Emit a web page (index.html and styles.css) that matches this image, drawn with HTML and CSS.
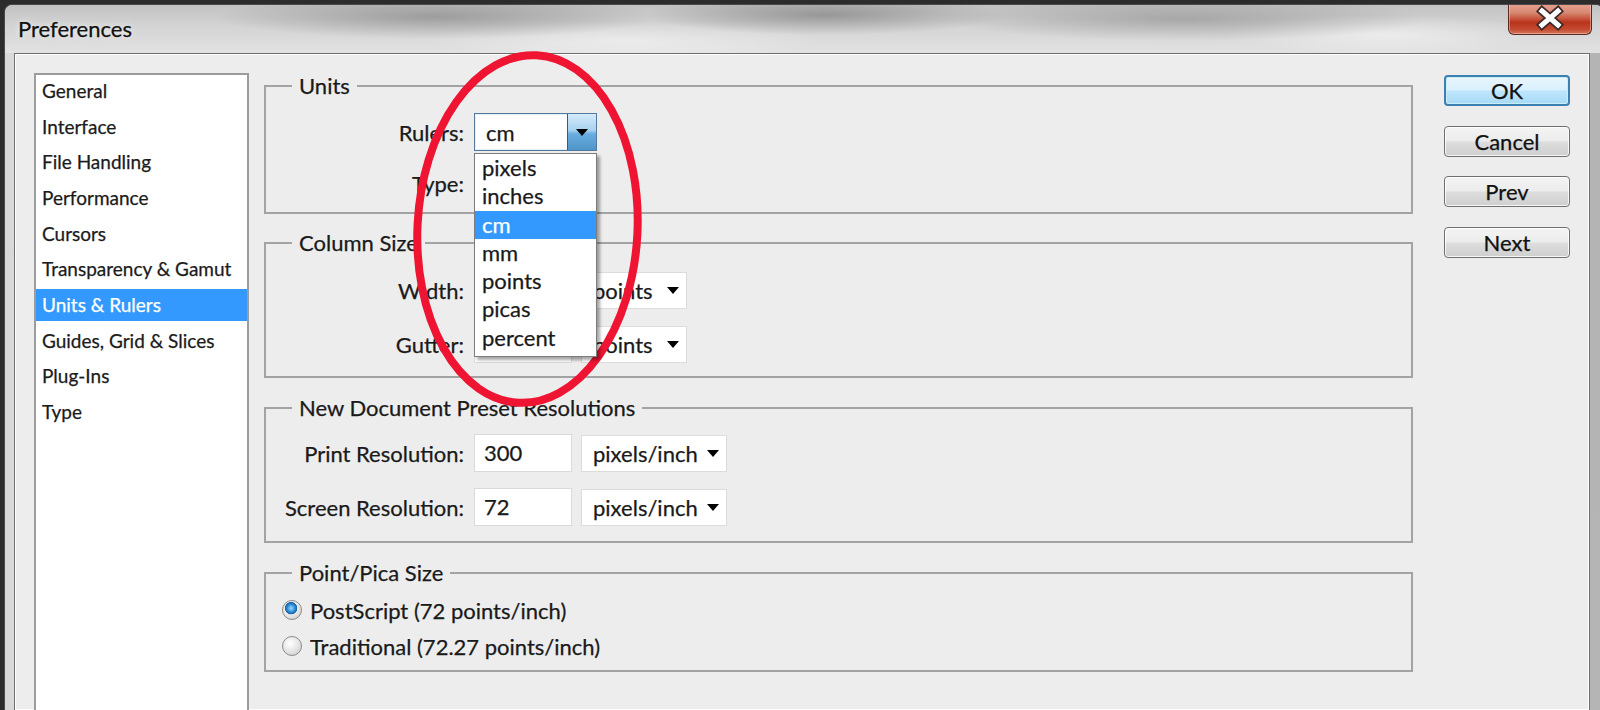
FILE: index.html
```html
<!DOCTYPE html>
<html lang="en">
<head>
<meta charset="utf-8">
<title>Preferences</title>
<link rel="stylesheet" href="styles.css">
</head>
<body>
<div class="window">
  <div class="titlebar">
    <span class="title">Preferences</span>
    <div class="close">
      <svg width="84" height="32" viewBox="0 0 84 32">
        <path d="M34 9 L50 23 M50 9 L34 23" stroke="#3b2a28" stroke-width="8.5" stroke-linecap="square"/>
        <path d="M34 9 L50 23 M50 9 L34 23" stroke="#ffffff" stroke-width="5" stroke-linecap="square"/>
      </svg>
    </div>
  </div>
  <div class="client">
    <ul class="nav">
      <li>General</li>
      <li>Interface</li>
      <li>File Handling</li>
      <li>Performance</li>
      <li>Cursors</li>
      <li>Transparency &amp; Gamut</li>
      <li class="selected">Units &amp; Rulers</li>
      <li>Guides, Grid &amp; Slices</li>
      <li>Plug-Ins</li>
      <li>Type</li>
    </ul>
    <div class="groups">
      <fieldset class="group g-units">
        <legend>Units</legend>
        <div class="row">
          <span class="lbl">Rulers:</span>
          <div class="controls">
            <div class="combo rulers">
              <span class="val">cm</span>
              <span class="dropbtn"><span class="tri"></span></span>
              <ul class="dropdown">
                <li>pixels</li>
                <li>inches</li>
                <li class="hl">cm</li>
                <li>mm</li>
                <li>points</li>
                <li>picas</li>
                <li>percent</li>
              </ul>
            </div>
          </div>
        </div>
        <div class="row">
          <span class="lbl">Type:</span>
          <div class="controls">
            <div class="combo plain w123"><span class="val"></span><span class="tri"></span></div>
          </div>
        </div>
      </fieldset>

      <fieldset class="group g-column">
        <legend>Column Size</legend>
        <div class="row">
          <span class="lbl">Width:</span>
          <div class="controls">
            <div class="field"></div>
            <div class="combo plain w106"><span class="val">points</span><span class="tri"></span></div>
          </div>
        </div>
        <div class="row">
          <span class="lbl">Gutter:</span>
          <div class="controls">
            <div class="field"></div>
            <div class="combo plain w106"><span class="val">points</span><span class="tri"></span></div>
          </div>
        </div>
      </fieldset>

      <fieldset class="group g-newdoc">
        <legend>New Document Preset Resolutions</legend>
        <div class="row">
          <span class="lbl">Print Resolution:</span>
          <div class="controls">
            <div class="field">300</div>
            <div class="combo plain w146"><span class="val">pixels/inch</span><span class="tri"></span></div>
          </div>
        </div>
        <div class="row">
          <span class="lbl">Screen Resolution:</span>
          <div class="controls">
            <div class="field">72</div>
            <div class="combo plain w146"><span class="val">pixels/inch</span><span class="tri"></span></div>
          </div>
        </div>
      </fieldset>

      <fieldset class="group g-point">
        <legend>Point/Pica Size</legend>
        <div class="radio-row"><span class="radio on"></span><span>PostScript (72 points/inch)</span></div>
        <div class="radio-row"><span class="radio"></span><span>Traditional (72.27 points/inch)</span></div>
      </fieldset>
    </div>
    <div class="buttons">
      <div class="btn default">OK</div>
      <div class="btn">Cancel</div>
      <div class="btn">Prev</div>
      <div class="btn">Next</div>
    </div>
  </div>
</div>
<svg class="annotation" width="1600" height="710" viewBox="0 0 1600 710">
  <ellipse cx="527.5" cy="229" rx="110" ry="174" transform="rotate(3 527.5 229)" fill="none" stroke="#ee1432" stroke-width="8"/>
</svg>
</body>
</html>
```

FILE: styles.css
```css
html, body {
  margin: 0;
  padding: 0;
  width: 1600px;
  height: 710px;
  overflow: hidden;
}
body {
  position: relative;
  background: #2c2c2c;
  font-family: Lato, "Open Sans", sans-serif;
  color: #1a1a1a;
  -webkit-text-stroke: 0.25px currentColor;
}

.window {
  margin: 4px 0 0 4px;
  width: 1600px;
  height: 706px;
  box-sizing: border-box;
  border: 1px solid #4a4a4a;
  border-bottom: none;
  border-radius: 8px 8px 0 0;
  background: linear-gradient(90deg, #d8d8d8 0, #dcdcdc 2%, #d0d0d0 60%, #b4b4b4 100%);
  overflow: hidden;
}

.titlebar {
  height: 48px;
  display: flex;
  justify-content: space-between;
  align-items: flex-start;
  border-radius: 7px 7px 0 0;
  background:
    radial-gradient(ellipse 220px 22px at 430px 12px, rgba(110,110,110,0.5), rgba(110,110,110,0)),
    radial-gradient(ellipse 180px 20px at 820px 10px, rgba(100,100,100,0.5), rgba(100,100,100,0)),
    radial-gradient(ellipse 240px 22px at 1180px 14px, rgba(120,120,120,0.45), rgba(120,120,120,0)),
    radial-gradient(ellipse 160px 20px at 1380px 30px, rgba(255,255,255,0.5), rgba(255,255,255,0)),
    radial-gradient(ellipse 200px 20px at 620px 36px, rgba(255,255,255,0.45), rgba(255,255,255,0)),
    linear-gradient(180deg, #c2c2c2 0, #d4d4d4 45%, #e2e2e2 100%);
}
.title {
  align-self: center;
  margin-left: 13px;
  margin-top: -2px;
  font-size: 22px;
  color: #111;
  text-shadow: 0 0 6px rgba(255,255,255,0.9);
}
.close {
  width: 84px;
  height: 32px;
  margin-top: -2px;
  margin-right: 11px;
  box-sizing: border-box;
  border: 1px solid #5a2820;
  border-top: none;
  border-radius: 0 0 6px 6px;
  background: linear-gradient(180deg, #e7a493 0, #d88a74 30%, #c9563e 50%, #b8341c 62%, #c44a30 85%, #d7775d 100%);
  box-shadow: inset 0 0 0 1px rgba(255,220,210,0.45);
}
.close svg { display: block; margin: -1px 0 0 -1px; }

.client {
  margin: 0 13px 0 9px;
  height: 657px;
  border: 1px solid #6e6e6e;
  border-bottom: none;
  box-shadow: inset 0 0 0 1px #ffffff;
  background: #ededed;
  display: flex;
  align-items: flex-start;
  padding: 19px 0 0 19px;
  box-sizing: border-box;
  overflow: hidden;
}

/* left category list */
.nav {
  list-style: none;
  margin: 0;
  padding: 0;
  width: 215px;
  height: 637px;
  box-sizing: border-box;
  border: 2px solid #9c9c9c;
  border-bottom: none;
  background: #ffffff;
  display: flex;
  flex-direction: column;
  gap: 3.67px;
  flex-shrink: 0;
}
.nav li {
  height: 32px;
  line-height: 32px;
  padding-left: 6px;
  font-size: 19px;
  color: #1b1b1b;
  white-space: nowrap;
}
.nav li.selected {
  background: #3399ff;
  color: #ffffff;
}

/* groups */
.groups {
  margin-left: 15px;
  width: 1149px;
  flex-shrink: 0;
}
.group {
  margin: 0 0 17px 0;
  padding: 0;
  min-width: 0;
  border: 2px solid #a3a3a3;
}
.group legend {
  margin-left: 26px;
  padding: 0 7px;
  font-size: 22px;
  line-height: 26px;
  color: #1a1a1a;
}
.g-units { padding: 14px 0 10px; margin-bottom: 16px; }
.g-units .row + .row { margin-top: 13px; }
.g-column { padding: 15px 0 13px; }
.g-column .row + .row { margin-top: 16px; }
.g-newdoc { padding: 13px 0 15px; }
.g-newdoc .row + .row { margin-top: 16px; }
.g-point { padding: 9px 0 9px; }

.row {
  display: grid;
  grid-template-columns: 198px auto;
  column-gap: 10px;
  align-items: center;
  height: 38px;
}
.lbl {
  text-align: right;
  font-size: 22px;
  white-space: nowrap;
}
.controls {
  display: flex;
  gap: 9px;
  align-items: center;
}

.field {
  width: 98px;
  height: 38px;
  box-sizing: border-box;
  border: 1px solid #dadada;
  background: #ffffff;
  padding-left: 9px;
  font-size: 22px;
  line-height: 36px;
}

.combo {
  position: relative;
  height: 38px;
  box-sizing: border-box;
  background: #ffffff;
  display: flex;
  align-items: center;
  font-size: 22px;
}
.combo .val { flex: 1; padding-left: 11px; white-space: nowrap; }
.combo.plain {
  border: 1px solid #dcdcdc;
  height: 37px;
}
.combo.plain .tri { margin-right: 7px; }
.w106 { width: 106px; }
.w123 { width: 123px; }
.w146 { width: 146px; }

.tri {
  width: 0;
  height: 0;
  border-left: 6.5px solid transparent;
  border-right: 6.5px solid transparent;
  border-top: 7px solid #000;
}

.combo.rulers {
  width: 123px;
  border: 1px solid #54799c;
  box-shadow: inset 0 0 0 1px #e6eef6;
}
.combo.rulers .val { padding-left: 11px; }
.dropbtn {
  align-self: stretch;
  width: 28px;
  display: flex;
  align-items: center;
  justify-content: center;
  border-left: 1px solid #2f5f88;
  background: linear-gradient(180deg, #d3ebfa 0, #a9d2f0 45%, #6aaee0 55%, #4f94c8 100%);
}

.dropdown {
  position: absolute;
  top: 39px;
  left: -1px;
  width: 123px;
  height: 204px;
  box-sizing: border-box;
  margin: 0;
  padding: 0;
  list-style: none;
  background: #ffffff;
  border: 1px solid #7c7c7c;
  box-shadow: 3px 3px 3px rgba(0,0,0,0.35);
  z-index: 2;
}
.dropdown li {
  height: 28.3px;
  line-height: 28px;
  padding-left: 7px;
  font-size: 22px;
  color: #1a1a1a;
}
.dropdown li.hl {
  background: #3399ff;
  color: #ffffff;
}

/* radios */
.radio-row {
  display: flex;
  align-items: center;
  gap: 8px;
  height: 30px;
  padding-left: 16px;
  font-size: 22px;
}
.radio-row + .radio-row { margin-top: 6px; }
.radio {
  width: 20px;
  height: 20px;
  box-sizing: border-box;
  border-radius: 50%;
  border: 1px solid #8a8a8a;
  background: radial-gradient(circle at 40% 35%, #ffffff 0, #e8e8e8 45%, #c9c9c9 100%);
  flex-shrink: 0;
}
.radio.on {
  background:
    radial-gradient(circle at 45% 40%, #9fdcff 0, #3a9ae0 22%, #1662a8 40%, rgba(22,98,168,0) 44%),
    radial-gradient(circle at 40% 35%, #ffffff 0, #e6e6e6 55%, #bdbdbd 100%);
}

/* buttons */
.buttons {
  margin-left: 31px;
  width: 126px;
  flex-shrink: 0;
  padding-top: 2px;
}
.btn {
  height: 31px;
  box-sizing: border-box;
  margin-bottom: 19.5px;
  border: 1px solid #707070;
  border-radius: 4px;
  background: linear-gradient(180deg, #f4f4f4 0, #ececec 48%, #dddddd 52%, #cfcfcf 100%);
  box-shadow: inset 0 0 0 1px rgba(255,255,255,0.8);
  text-align: center;
  font-size: 22px;
  line-height: 29px;
  color: #111;
}
.btn.default {
  border: 2px solid #3c7fb1;
  line-height: 27px;
  background: linear-gradient(180deg, #eaf6fd 0, #d9f0fc 48%, #bee6fd 52%, #a7d9f5 100%);
  box-shadow: inset 0 0 0 1px #c9ecfb;
}

.annotation {
  position: absolute;
  left: 0;
  top: 0;
  pointer-events: none;
}
```
